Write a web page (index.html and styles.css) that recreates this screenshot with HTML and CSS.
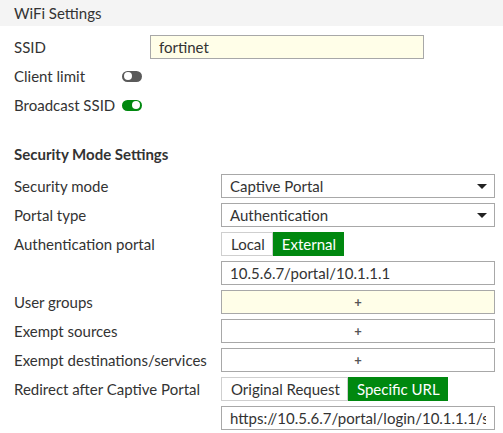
FILE: index.html
```html
<!DOCTYPE html>
<html lang="en">
<head>
<meta charset="utf-8">
<title>WiFi Settings</title>
<link rel="stylesheet" href="styles.css">
</head>
<body>
  <div class="panel-header">WiFi Settings</div>

  <div class="wifi-section">
    <div class="row">
      <label class="label label-ssid">SSID</label>
      <div class="field field-ssid required"><span class="field-text">fortinet</span></div>
    </div>
    <div class="row">
      <label class="label label-toggle">Client limit</label>
      <span class="toggle"><span class="knob"></span></span>
    </div>
    <div class="row">
      <label class="label label-toggle">Broadcast SSID</label>
      <span class="toggle on"><span class="knob"></span></span>
    </div>
  </div>

  <h3 class="section-title">Security Mode Settings</h3>

  <div class="form-grid">
    <label class="label">Security mode</label>
    <div class="field select"><span class="field-text">Captive Portal</span><span class="caret"></span></div>

    <label class="label">Portal type</label>
    <div class="field select"><span class="field-text">Authentication</span><span class="caret"></span></div>

    <label class="label">Authentication portal</label>
    <div class="btn-group">
      <span class="seg">Local</span><span class="seg active">External</span>
    </div>

    <span class="label"></span>
    <div class="field"><span class="field-text">10.5.6.7/portal/10.1.1.1</span></div>

    <label class="label">User groups</label>
    <div class="field add required"><span class="plus">+</span></div>

    <label class="label">Exempt sources</label>
    <div class="field add"><span class="plus">+</span></div>

    <label class="label">Exempt destinations/services</label>
    <div class="field add"><span class="plus">+</span></div>

    <label class="label">Redirect after Captive Portal</label>
    <div class="btn-group">
      <span class="seg">Original Request</span><span class="seg active">Specific URL</span>
    </div>

    <span class="label"></span>
    <div class="field"><span class="field-text clip">https://10.5.6.7/portal/login/10.1.1.1/success</span></div>
  </div>
</body>
</html>
```

FILE: styles.css
```css
html, body {
  margin: 0;
  padding: 0;
  background: #ffffff;
}

body {
  font-family: Lato, "Open Sans", "Liberation Sans", sans-serif;
  font-size: 15px;
  color: #333333;
  width: 503px;
  height: 433px;
  overflow: hidden;
}

.panel-header {
  height: 26px;
  line-height: 26px;
  padding-left: 14px;
  background: #f4f4f4;
}

/* top block: SSID and toggles */
.wifi-section {
  padding: 9px 14px 0;
  display: flex;
  flex-direction: column;
  gap: 5px;
}

.row {
  display: flex;
  align-items: center;
  height: 24px;
}

.label {
  line-height: 24px;
  white-space: nowrap;
}

.label-ssid {
  width: 136px;
}

.label-toggle {
  width: 108px;
}

.toggle {
  position: relative;
  display: inline-block;
  width: 20px;
  height: 11px;
  border-radius: 6px;
  background: #5a5a5a;
}

.toggle .knob {
  position: absolute;
  top: 1.5px;
  left: 2px;
  width: 8px;
  height: 8px;
  border-radius: 50%;
  background: #ffffff;
}

.toggle.on {
  background: #00880f;
}

.toggle.on .knob {
  left: 10px;
}

.section-title {
  margin: 26px 0 9px 14px;
  font-size: 15px;
  font-weight: bold;
  line-height: 22px;
  color: #333333;
}

/* security mode form */
.form-grid {
  display: grid;
  grid-template-columns: 207px 274px;
  grid-auto-rows: 24px;
  row-gap: 5px;
  padding-left: 14px;
}

.field {
  box-sizing: border-box;
  height: 24px;
  border: 1px solid #a8a8a8;
  background: #ffffff;
  display: flex;
  align-items: center;
  padding: 0 8px;
  position: relative;
}

.field-ssid {
  width: 274px;
}

.field.required {
  background: #fffee8;
}

.field-text {
  line-height: 22px;
  white-space: nowrap;
}

.field-text.clip {
  overflow: hidden;
  flex: 1;
}

.select .field-text {
  flex: 1;
}

.caret {
  width: 0;
  height: 0;
  border-left: 5px solid transparent;
  border-right: 5px solid transparent;
  border-top: 5px solid #222222;
  margin-right: -1px;
}

.add {
  justify-content: center;
}

.plus {
  font-weight: bold;
  font-size: 13px;
  color: #555555;
  line-height: 22px;
}

.btn-group {
  display: flex;
  height: 24px;
}

.seg {
  box-sizing: border-box;
  height: 24px;
  line-height: 22px;
  padding: 0 7px 0 9px;
  border: 1px solid #cfcfcf;
  background: #ffffff;
  white-space: nowrap;
}

.seg + .seg {
  border-left: none;
}

.seg.active {
  background: #00880f;
  border-color: #00880f;
  color: #ffffff;
}
```
